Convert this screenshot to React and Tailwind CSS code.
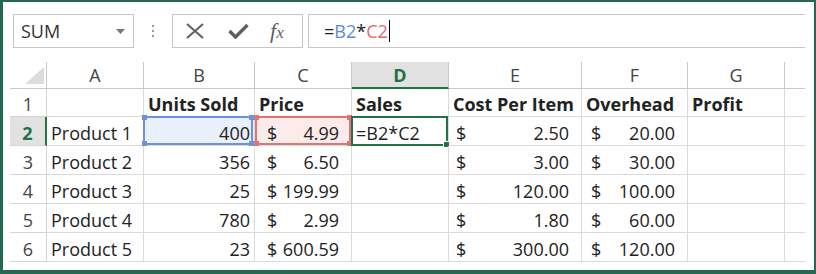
import React from "react";

const COLS = ["A", "B", "C", "D", "E", "F", "G"];

const ROWS = [
  ["Product 1", "400", "4.99", "=B2*C2", "2.50", "20.00"],
  ["Product 2", "356", "6.50", "", "3.00", "30.00"],
  ["Product 3", "25", "199.99", "", "120.00", "100.00"],
  ["Product 4", "780", "2.99", "", "1.80", "60.00"],
  ["Product 5", "23", "600.59", "", "300.00", "120.00"],
];

const HEADERS = ["", "Units Sold", "Price", "Sales", "Cost Per Item", "Overhead", "Profit"];

function Corner({ color, pos }) {
  const map = {
    tl: "-left-[3px] -top-[3px]",
    tr: "-right-[3px] -top-[3px]",
    bl: "-left-[3px] -bottom-[3px]",
    br: "-right-[3px] -bottom-[3px]",
  };
  return <span className={`absolute w-[5px] h-[5px] ${map[pos]} ${color}`} />;
}

function Money({ value, pl }) {
  return (
    <div className={`flex h-full items-end justify-between pr-[12px] ${pl}`}>
      <span className="leading-[24px]">$</span>
      <span className="leading-[24px]">{value}</span>
    </div>
  );
}

export default function App() {
  return (
    <div className="w-[816px] h-[274px] box-border bg-white border-[#23684f] border-l-[3px] border-t-2 border-r-2 border-b-4 overflow-hidden font-['Open_Sans',sans-serif] text-[#222]">
      {/* Formula bar */}
      <div className="flex h-[34px] mt-[12px] ml-[10px]">
        <div className="w-[121px] h-full border border-[#c6c6c6] flex items-center justify-between pl-[7px] pr-[8px]">
          <span className="text-[18px] text-[#333] leading-none">SUM</span>
          <svg width="9" height="5" viewBox="0 0 9 5">
            <polygon points="0,0 9,0 4.5,5" fill="#777" />
          </svg>
        </div>
        <div className="w-[38px] h-full flex flex-col items-center justify-center gap-[3px]">
          <span className="w-[2px] h-[2px] bg-[#9a9a9a]" />
          <span className="w-[2px] h-[2px] bg-[#9a9a9a]" />
          <span className="w-[2px] h-[2px] bg-[#9a9a9a]" />
        </div>
        <div className="w-[131px] h-full border border-[#c6c6c6] flex items-center pl-[13px]">
          <svg width="18" height="16" viewBox="0 0 18 16">
            <path d="M1 1 L17 15 M17 1 L1 15" stroke="#5f5f5f" strokeWidth="2" fill="none" />
          </svg>
          <svg width="21" height="16" viewBox="0 0 21 16" className="ml-[24px]">
            <path d="M1.5 8 L7.5 14 L19.5 2" stroke="#5f5f5f" strokeWidth="3.4" fill="none" />
          </svg>
          <span className="ml-[21px] font-['Liberation_Serif',serif] italic text-[22px] text-[#5f5f5f] leading-none">
            f<span className="text-[17px]">x</span>
          </span>
        </div>
        <div className="ml-[5px] w-[497px] h-full border-l border-t border-b border-[#c6c6c6] flex items-center pl-[15px] text-[18px]">
          <span className="text-[#222]">=</span>
          <span className="text-[#5b8bd6]">B2</span>
          <span className="text-[#222]">*</span>
          <span className="text-[#dd6b6b]">C2</span>
          <span className="ml-[1px] w-[1.5px] h-[22px] bg-black" />
        </div>
      </div>

      {/* Grid */}
      <div className="mt-[14px] ml-[7px] grid grid-cols-[37px_97px_111px_97px_97px_133px_106px_97px_20px] grid-rows-[27px_28px_29px_29px_29px_29px_29px] text-[18px]">
        {/* header row */}
        <div className="relative border-b border-r border-[#c9c9c9]">
          <svg width="19" height="17" viewBox="0 0 19 17" className="absolute left-[15px] top-[5px]">
            <polygon points="19,0 19,17 0,17" fill="#dcdcdc" />
          </svg>
        </div>
        {COLS.map((c) =>
          c === "D" ? (
            <div
              key={c}
              className="bg-[#e1e1e1] border-b-2 border-b-[#217346] border-r border-r-[#c9c9c9] flex items-center justify-center font-bold text-[#217346] pt-[1px]"
            >
              {c}
            </div>
          ) : (
            <div
              key={c}
              className="border-b border-r border-[#c9c9c9] flex items-center justify-center text-[#444] pt-[1px]"
            >
              {c}
            </div>
          )
        )}
        <div className="border-b border-[#c9c9c9]" />

        {/* row 1 */}
        <div className="border-b border-r border-[#d4d4d4] flex items-end justify-center text-[#444]">
          <span className="leading-[24px]">1</span>
        </div>
        {HEADERS.map((h, i) => (
          <div key={i} className="border-b border-r border-[#dadada] flex items-end pl-[4px] font-bold">
            <span className="leading-[24px] whitespace-nowrap">{h}</span>
          </div>
        ))}
        <div className="border-b border-[#dadada]" />

        {/* data rows */}
        {ROWS.map((r, ri) => {
          const sel = ri === 0;
          return (
            <React.Fragment key={ri}>
              {sel ? (
                <div className="bg-[#e1e1e1] border-b border-b-[#d4d4d4] border-r-2 border-r-[#217346] flex items-end justify-center font-bold text-[#217346]">
                  <span className="leading-[24px]">2</span>
                </div>
              ) : (
                <div className="border-b border-r border-[#d4d4d4] flex items-end justify-center text-[#444]">
                  <span className="leading-[24px]">{ri + 2}</span>
                </div>
              )}
              {/* A */}
              <div className="border-b border-r border-[#dadada] flex items-end pl-[4px]">
                <span className="leading-[24px] whitespace-nowrap">{r[0]}</span>
              </div>
              {/* B */}
              <div className={`relative border-b border-r border-[#dadada] flex items-end justify-end pr-[4px] ${sel ? "bg-[#e9effb]" : ""}`}>
                <span className="leading-[24px]">{r[1]}</span>
                {sel && (
                  <div className="absolute -left-[1px] -top-[1px] right-[1px] bottom-0 border-2 border-[#6a93dc]">
                    <Corner color="bg-[#6a93dc]" pos="tl" />
                    <Corner color="bg-[#6a93dc]" pos="tr" />
                    <Corner color="bg-[#6a93dc]" pos="bl" />
                    <Corner color="bg-[#6a93dc]" pos="br" />
                  </div>
                )}
              </div>
              {/* C */}
              <div className={`relative border-b border-r border-[#dadada] ${sel ? "bg-[#fcebeb]" : ""}`}>
                <Money value={r[2]} pl="pl-[12px]" />
                {sel && (
                  <div className="absolute left-0 -top-[1px] right-0 bottom-0 border-2 border-[#e07474]">
                    <Corner color="bg-[#e07474]" pos="tl" />
                    <Corner color="bg-[#e07474]" pos="tr" />
                    <Corner color="bg-[#e07474]" pos="bl" />
                    <Corner color="bg-[#e07474]" pos="br" />
                  </div>
                )}
              </div>
              {/* D */}
              <div className="relative border-b border-r border-[#dadada] flex items-end pl-[4px]">
                <span className="leading-[24px] whitespace-nowrap">{r[3]}</span>
                {sel && (
                  <div className="absolute -left-[1px] -top-[1px] right-0 -bottom-[1px] border-2 border-[#217346]">
                    <span className="absolute -right-[3px] -bottom-[3px] w-[5px] h-[5px] bg-[#217346] outline outline-1 outline-white" />
                  </div>
                )}
              </div>
              {/* E */}
              <div className="border-b border-r border-[#dadada]">
                <Money value={r[4]} pl="pl-[7px]" />
              </div>
              {/* F */}
              <div className="border-b border-r border-[#dadada]">
                <Money value={r[5]} pl="pl-[9px]" />
              </div>
              {/* G */}
              <div className="border-b border-r border-[#dadada]" />
              <div className="border-b border-[#dadada]" />
            </React.Fragment>
          );
        })}
      </div>
    </div>
  );
}
